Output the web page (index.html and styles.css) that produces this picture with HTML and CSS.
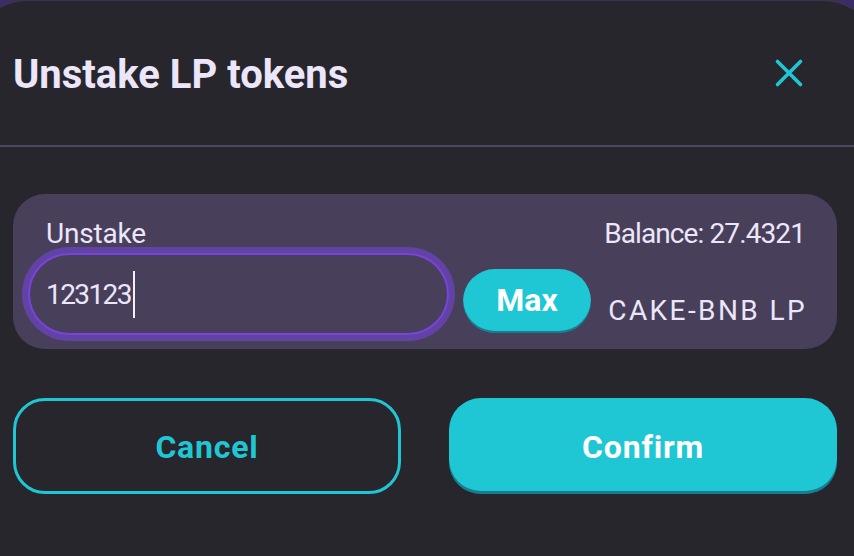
FILE: index.html
```html
<!DOCTYPE html>
<html lang="en">
<head>
<meta charset="utf-8">
<title>Unstake LP tokens</title>
<link rel="stylesheet" href="styles.css">
</head>
<body>
<div class="modal">
  <div class="modal-header">
    <h2 class="title">Unstake LP tokens</h2>
    <button class="close-btn" aria-label="Close">
      <svg width="48" height="48" viewBox="0 0 48 48"><path d="M12.5 12.5 L35.5 35.5 M35.5 12.5 L12.5 35.5" stroke="#1fc7d4" stroke-width="3.6" stroke-linecap="round" fill="none"/></svg>
    </button>
  </div>
  <div class="modal-body">
    <div class="panel">
      <div class="panel-top">
        <span class="label">Unstake</span>
        <span class="label balance">Balance: 27.4321</span>
      </div>
      <div class="panel-row">
        <div class="input"><span class="value">123123</span><span class="caret"></span></div>
        <button class="max-btn">Max</button>
        <span class="symbol">CAKE-BNB LP</span>
      </div>
    </div>
    <div class="actions">
      <button class="btn btn-secondary">Cancel</button>
      <button class="btn btn-primary">Confirm</button>
    </div>
  </div>
</div>
</body>
</html>
```
FILE: styles.css
```css
html, body {
  margin: 0;
  padding: 0;
}
body {
  width: 854px;
  height: 556px;
  overflow: hidden;
  background: #3b2c68;
  font-family: Roboto, "Noto Sans", sans-serif;
  color: #f4eeff;
}
.modal {
  width: 920px;
  margin-left: -35px;
  margin-top: -1px;
  background: #27262c;
  border: 2px solid #3a3350;
  border-radius: 64px 64px 0 0;
  min-height: 620px;
  box-sizing: border-box;
}
.modal-header {
  display: flex;
  align-items: center;
  padding: 24px 46px 24px 46px;
  border-bottom: 2px solid #4f4862;
}
.title {
  flex: 1;
  margin: 0;
  padding-top: 3px;
  font-size: 40px;
  font-weight: 700;
  line-height: 1.1;
  color: #ece6fb;
}
.close-btn {
  width: 96px;
  height: 96px;
  display: flex;
  align-items: center;
  justify-content: center;
  background: transparent;
  border: 0;
  padding: 0;
}
.modal-body {
  padding: 47px 48px 48px 46px;
}
.panel {
  width: 824px;
  background: #483f5a;
  border-radius: 32px;
  padding: 19px 32px 16px 17px;
  box-sizing: border-box;
}
.panel-top {
  display: flex;
  justify-content: space-between;
  padding-left: 16px;
  height: 42px;
}
.label {
  font-size: 28px;
  line-height: 42px;
  letter-spacing: -0.2px;
  color: #ece6fb;
}
.balance {
  letter-spacing: -0.9px;
}
.panel-row {
  display: flex;
  align-items: flex-end;
}
.input {
  width: 417px;
  height: 78px;
  box-sizing: border-box;
  display: flex;
  align-items: center;
  padding: 0 16px;
  border-radius: 40px;
  background: #483f5a;
  box-shadow: 0 0 0 2px #7645d9, 0 0 0 8px rgba(118, 69, 217, 0.6);
  font-size: 28px;
  color: #ece6fb;
}
.value {
  letter-spacing: -1.6px;
}
.caret {
  width: 2px;
  height: 47px;
  margin-left: 2px;
  background: #f4eeff;
}
.max-btn {
  width: 128px;
  height: 64px;
  margin-left: 16px;
  margin-bottom: 0;
  border: 0;
  border-radius: 32px;
  background: #1fc7d4;
  box-shadow: inset 0 -2px 0 rgba(14, 14, 44, 0.4);
  color: #ffffff;
  font-family: Roboto, "Noto Sans", sans-serif;
  font-size: 32px;
  font-weight: 700;
  padding: 0 0 2px;
}
.symbol {
  margin-left: auto;
  font-size: 28px;
  line-height: 42px;
  letter-spacing: 2.4px;
  margin-right: -2px;
  margin-bottom: 1px;
  color: #ece6fb;
}
.actions {
  display: grid;
  grid-template-columns: 388px 388px;
  gap: 48px;
  margin-top: 49px;
}
.btn {
  height: 96px;
  border-radius: 32px;
  font-family: Roboto, "Noto Sans", sans-serif;
  font-size: 32px;
  font-weight: 700;
  letter-spacing: 0.8px;
  padding: 2px 0 0;
}
.btn-secondary {
  background: transparent;
  border: 3.5px solid #1fc7d4;
  color: #1fc7d4;
}
.btn-primary {
  background: #1fc7d4;
  border: 0;
  color: #ffffff;
  box-shadow: inset 0 -3px 0 rgba(14, 14, 44, 0.4);
}
```
